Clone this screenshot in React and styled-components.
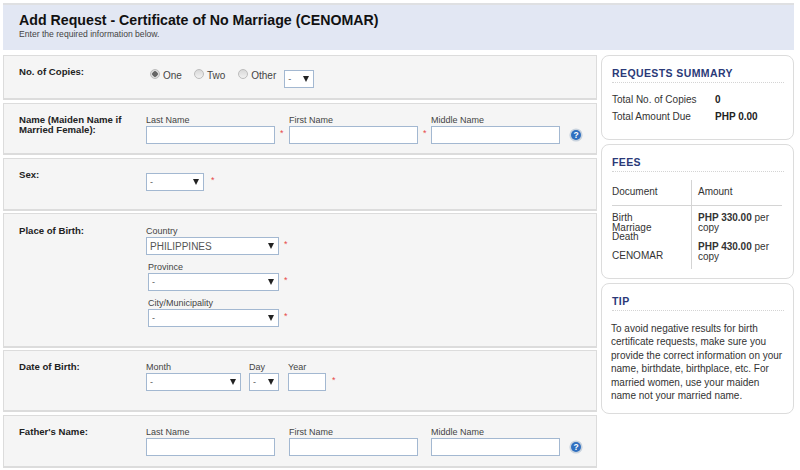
import styled, { createGlobalStyle } from 'styled-components'

const GlobalStyle = createGlobalStyle`
    html, body {
        margin: 0;
        padding: 0;
        background: #fff;
        color: #222;
        font-family: "Liberation Sans", Arial, sans-serif;
    }
`
const Page = styled.div`
    width: 800px;
    height: 470px;
    overflow: hidden;
    box-sizing: border-box;
    padding: 3px 6px 0 3px;
`
const Header = styled.header`
    height: 47px;
    box-sizing: border-box;
    background: #e2e7f3;
    border-top: 2px solid #dfe0e2;
    padding: 6px 16px 0;
`
const Title = styled.h1`
    margin: 0;
    font-size: 14.2px;
    line-height: 18px;
    font-weight: bold;
    color: #111;
`
const Subtitle = styled.p`
    margin: 0;
    font-size: 8.6px;
    line-height: 11px;
    color: #444;
`
const Columns = styled.div`
    display: flex;
    gap: 4px;
    margin-top: 5px;
`
const Left = styled.div`
    width: 594px;
    display: flex;
    flex-direction: column;
`
const Right = styled.aside`
    width: 193px;
    display: flex;
    flex-direction: column;
    gap: 4px;
`
const Row = styled.section`
    height: ${p => p.$h}px;
    box-sizing: border-box;
    display: flex;
    align-items: flex-start;
    margin-top: ${p => p.$mt ?? 3}px;
    background: #f5f5f5;
    border: 1px solid #dcdcdc;
    border-bottom-width: 2px;
    padding-top: ${p => p.$top || 11}px;
`
const RowLabel = styled.div`
    width: 142px;
    flex: none;
    box-sizing: border-box;
    padding-left: 15px;
    padding-right: 15px;
    font-size: 9.6px;
    line-height: 10px;
    font-weight: bold;
    color: #222;
`
const Fields = styled.div`
    display: flex;
    flex-direction: ${p => p.$column ? 'column' : 'row'};
    align-items: ${p => p.$column ? 'flex-start' : 'flex-end'};
    gap: ${p => p.$gap || 0}px;
    margin-top: ${p => p.$top || 0}px;
`
const Field = styled.label`
    display: flex;
    flex-direction: column;
    margin-left: ${p => p.$shift || 0}px;
    margin-right: ${p => p.$mr || 0}px;
`
const Caption = styled.span`
    font-size: 9px;
    line-height: 10px;
    color: #444;
    margin-bottom: 1px;
`
const TextInput = styled.input`
    width: ${p => p.$w}px;
    height: 18px;
    box-sizing: border-box;
    padding: 0 3px;
    background: #fff;
    border: 1px solid #a3b8d1;
    border-radius: 0;
    outline: none;
`
const Star = styled.span`
    width: ${p => p.$w || 14}px;
    flex: none;
    padding-left: ${p => p.$pad || 5}px;
    box-sizing: border-box;
    margin-bottom: 5px;
    font-size: 9px;
    line-height: 12px;
    color: #e8474a;
`
const SelectWrap = styled.span`
    position: relative;
    display: block;
    width: ${p => p.$w}px;
    height: 18px;

    &::after {
        content: "";
        position: absolute;
        top: 6px;
        right: 5px;
        border-left: 3.5px solid transparent;
        border-right: 3.5px solid transparent;
        border-top: 6px solid #222;
        pointer-events: none;
    }
`
const Select = styled.select`
    appearance: none;
    display: block;
    width: 100%;
    height: 100%;
    box-sizing: border-box;
    padding: 0 14px 0 3px;
    background: #fff;
    border: 1px solid #a3b8d1;
    border-radius: 0;
    outline: none;
    color: #555;
    font-family: inherit;
    font-size: ${p => p.$big ? 10 : 9}px;
`
const Radios = styled.div`
    display: flex;
    align-items: flex-start;
    margin: 3px 0 0 4px;
`
const RadioLabel = styled.label`
    display: flex;
    align-items: flex-start;
    margin-right: ${p => p.$mr}px;
    font-size: 10px;
    line-height: 12px;
    color: #444;
`
const Radio = styled.input`
    appearance: none;
    width: 10px;
    height: 10px;
    margin: -1px 3px 0 0;
    border-radius: 50%;
    border: 1px solid #bcbcbc;
    background: linear-gradient(#d8d8d8, #f2f2f2);

    &:checked {
        background: radial-gradient(circle, #666 0 2.5px, #dcdcdc 3px);
    }
`
const Help = styled.svg`
    width: 14px;
    height: 14px;
    margin: 0 0 2px 9px;
    flex: none;
`
const Card = styled.div`
    height: ${p => p.$h}px;
    box-sizing: border-box;
    background: #fff;
    border: 1px solid #dcdcdc;
    border-radius: 8px;
    padding: 12px 9px 0 10px;
`
const CardTitle = styled.h2`
    margin: 0;
    height: 14px;
    border-bottom: 1px dotted #d4d4d4;
    font-size: 10.5px;
    line-height: 11px;
    font-weight: bold;
    letter-spacing: 0.4px;
    color: #2b3a78;
`
const Totals = styled.div`
    display: grid;
    grid-template-columns: 103px 1fr;
    row-gap: 3px;
    margin-top: 10px;
    font-size: 10px;
    line-height: 14px;
    color: #333;

    b {
        color: #222;
    }
`
const FeeTable = styled.div`
    display: grid;
    grid-template-columns: 79px 1fr;
    grid-template-rows: 26px 63px;
    width: 170px;
    margin-top: 8px;
    font-size: 10px;
    color: #333;
`
const FeeHead = styled.div`
    border-bottom: 1px solid #d4d4d4;
    border-left: ${p => p.$rule ? '1px solid #d4d4d4' : 'none'};
    padding-left: ${p => p.$rule ? 6 : 0}px;
    line-height: 24px;
`
const FeeCell = styled.div`
    border-left: ${p => p.$rule ? '1px solid #d4d4d4' : 'none'};
    padding-left: ${p => p.$rule ? 6 : 0}px;
    padding-top: 7px;
    line-height: 9.6px;
`
const FeeGap = styled.div`
    margin-top: ${p => p.$top}px;
`
const TipText = styled.p`
    margin: 11px 0 0 -1px;
    font-size: 10px;
    line-height: 13.4px;
    color: #333;
`

const HelpIcon = () => (
    <Help viewBox="0 0 14 14">
        <circle cx="7" cy="7" r="6.6" fill="#c9d3de" />
        <circle cx="7" cy="7" r="5" fill="#2f6fc0" />
        <text x="7" y="10" textAnchor="middle" fontSize="8.5" fontWeight="bold" fontFamily="Liberation Sans" fill="#fff">?</text>
    </Help>
)

const Dropdown = ({ w, value = '-', big }) => (
    <SelectWrap $w={w}>
        <Select $big={big} defaultValue={value}>
            <option>{value}</option>
        </Select>
    </SelectWrap>
)

const NameFields = ({ required }) => (
    <Fields>
        <Field>
            <Caption>Last Name</Caption>
            <TextInput $w={129} />
        </Field>
        <Star>{required ? '*' : ''}</Star>
        <Field>
            <Caption>First Name</Caption>
            <TextInput $w={129} />
        </Field>
        <Star $w={13}>{required ? '*' : ''}</Star>
        <Field>
            <Caption>Middle Name</Caption>
            <TextInput $w={129} />
        </Field>
        <HelpIcon />
    </Fields>
)

const App = () => {
    return (
        <Page>
            <GlobalStyle />
            <Header>
                <Title>Add Request - Certificate of No Marriage (CENOMAR)</Title>
                <Subtitle>Enter the required information below.</Subtitle>
            </Header>
            <Columns>
                <Left>
                    <Row $h={45} $mt={0}>
                        <RowLabel>No. of Copies:</RowLabel>
                        <Radios>
                            <RadioLabel $mr={12}><Radio type="radio" name="copies" defaultChecked />One</RadioLabel>
                            <RadioLabel $mr={13}><Radio type="radio" name="copies" />Two</RadioLabel>
                            <RadioLabel $mr={8}><Radio type="radio" name="copies" />Other</RadioLabel>
                            <Dropdown w={30} />
                        </Radios>
                    </Row>
                    <Row $h={52}>
                        <RowLabel>Name (Maiden Name if Married Female):</RowLabel>
                        <NameFields required />
                    </Row>
                    <Row $h={53}>
                        <RowLabel>Sex:</RowLabel>
                        <Fields $top={3}>
                            <Dropdown w={58} />
                            <Star $pad={7}>*</Star>
                        </Fields>
                    </Row>
                    <Row $h={135} $top={12} $mt={2}>
                        <RowLabel>Place of Birth:</RowLabel>
                        <Fields $column $gap={7}>
                            <Fields>
                                <Field>
                                    <Caption>Country</Caption>
                                    <Dropdown w={133} value="PHILIPPINES" big />
                                </Field>
                                <Star>*</Star>
                            </Fields>
                            <Fields>
                                <Field $shift={2}>
                                    <Caption>Province</Caption>
                                    <Dropdown w={131} />
                                </Field>
                                <Star>*</Star>
                            </Fields>
                            <Fields>
                                <Field $shift={2}>
                                    <Caption>City/Municipality</Caption>
                                    <Dropdown w={131} />
                                </Field>
                                <Star>*</Star>
                            </Fields>
                        </Fields>
                    </Row>
                    <Row $h={62} $mt={2}>
                        <RowLabel>Date of Birth:</RowLabel>
                        <Fields>
                            <Field $mr={8}>
                                <Caption>Month</Caption>
                                <Dropdown w={95} />
                            </Field>
                            <Field $mr={9}>
                                <Caption>Day</Caption>
                                <Dropdown w={30} />
                            </Field>
                            <Field>
                                <Caption>Year</Caption>
                                <TextInput $w={38} />
                            </Field>
                            <Star $pad={6}>*</Star>
                        </Fields>
                    </Row>
                    <Row $h={53}>
                        <RowLabel>Father's Name:</RowLabel>
                        <NameFields />
                    </Row>
                </Left>
                <Right>
                    <Card $h={85}>
                        <CardTitle>REQUESTS SUMMARY</CardTitle>
                        <Totals>
                            <span>Total No. of Copies</span><b>0</b>
                            <span>Total Amount Due</span><b>PHP 0.00</b>
                        </Totals>
                    </Card>
                    <Card $h={135}>
                        <CardTitle>FEES</CardTitle>
                        <FeeTable>
                            <FeeHead>Document</FeeHead>
                            <FeeHead $rule>Amount</FeeHead>
                            <FeeCell>
                                <div>Birth</div>
                                <div>Marriage</div>
                                <div>Death</div>
                                <FeeGap $top={9}>CENOMAR</FeeGap>
                            </FeeCell>
                            <FeeCell $rule>
                                <div><b>PHP 330.00</b> per</div>
                                <div>copy</div>
                                <FeeGap $top={10}><b>PHP 430.00</b> per</FeeGap>
                                <div>copy</div>
                            </FeeCell>
                        </FeeTable>
                    </Card>
                    <Card $h={131}>
                        <CardTitle>TIP</CardTitle>
                        <TipText>
                            To avoid negative results for birth certificate requests, make sure you provide the correct information on your name, birthdate, birthplace, etc. For married women, use your maiden name not your married name.
                        </TipText>
                    </Card>
                </Right>
            </Columns>
        </Page>
    )
}

export default App
